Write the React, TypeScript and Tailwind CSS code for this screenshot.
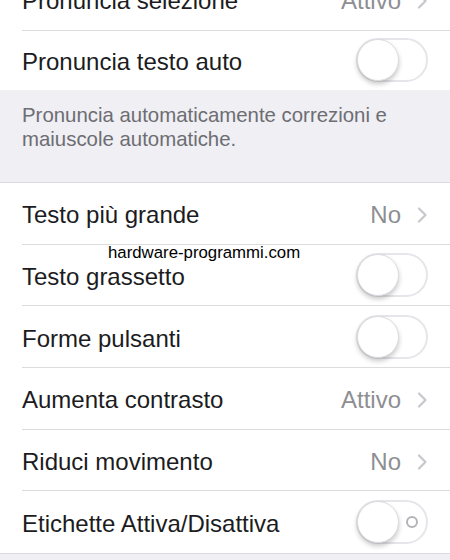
import React from "react";

type Row =
  | { label: string; kind: "value"; value: string }
  | { label: string; kind: "toggle"; labels?: boolean };

const font = { fontFamily: '"Liberation Sans", Arial, sans-serif' };

function Chevron() {
  return (
    <svg width="11" height="18" viewBox="0 0 11 18" className="ml-[16px]">
      <path d="M2 2.5 L8.5 9 L2 15.5" fill="none" stroke="#c7c7cc" strokeWidth="2.2" strokeLinecap="round" strokeLinejoin="round" />
    </svg>
  );
}

function Toggle({ labels }: { labels?: boolean }) {
  return (
    <div className="relative w-[72px] h-[44px] rounded-full border-[2px] border-[#e6e6ea] bg-white">
      <div className="absolute left-[-1px] top-[-1px] w-[42px] h-[42px] rounded-full bg-white border border-[#dcdce0] shadow-[0_3px_5px_rgba(0,0,0,0.22)]" />
      {labels && (
        <div className="absolute right-[8px] top-[14px] w-[12px] h-[12px] rounded-full border-[2px] border-[#b3b3b8]" />
      )}
    </div>
  );
}

function SettingRow({ row, last, className = "" }: { row: Row; last?: boolean; className?: string }) {
  return (
    <div className={`relative h-[61.67px] pl-[22px] bg-white ${className}`}>
      <div
        className={`h-full flex items-center pr-[22px] ${last ? "" : "border-b border-[#dcdce0]"}`}
      >
        <span className="flex-1 text-[24px] text-[#1c1c1e] translate-y-[2px]">{row.label}</span>
        {row.kind === "value" ? (
          <div className="flex items-center translate-y-[2px]">
            <span className="text-[24px] text-[#8e8e93]">{row.value}</span>
            <Chevron />
          </div>
        ) : (
          <Toggle labels={row.labels} />
        )}
      </div>
    </div>
  );
}

const group: Row[] = [
  { label: "Testo più grande", kind: "value", value: "No" },
  { label: "Testo grassetto", kind: "toggle" },
  { label: "Forme pulsanti", kind: "toggle" },
  { label: "Aumenta contrasto", kind: "value", value: "Attivo" },
  { label: "Riduci movimento", kind: "value", value: "No" },
  { label: "Etichette Attiva/Disattiva", kind: "toggle", labels: true },
];

export default function App() {
  return (
    <div className="relative w-[450px] h-[560px] overflow-hidden bg-[#efeff4]" style={font}>
      {/* first group, scrolled partly out of view */}
      <div className="-mt-[31px]">
        <SettingRow row={{ label: "Pronuncia selezione", kind: "value", value: "Attivo" }} />
        <div className="h-[59.5px] bg-white pl-[22px]">
          <div className="h-full flex items-center pr-[22px]">
            <span className="flex-1 text-[24px] text-[#1c1c1e] translate-y-[2px]">Pronuncia testo auto</span>
            <Toggle />
          </div>
        </div>
      </div>

      <div className="h-[93px] border-b border-[#dcdce0] px-[22px] pt-[13px] text-[20.4px] leading-[24px] text-[#6d6d72]">
        Pronuncia automaticamente correzioni e
        <br />
        maiuscole automatiche.
      </div>

      <div>
        {group.map((r, i) => (
          <SettingRow key={r.label} row={r} last={i === group.length - 1} />
        ))}
      </div>
      <div className="border-t border-[#dcdce0]" />

      <div className="absolute left-[108px] top-[242px] text-[16.8px] text-black leading-[22px]">
        hardware-programmi.com
      </div>
    </div>
  );
}
